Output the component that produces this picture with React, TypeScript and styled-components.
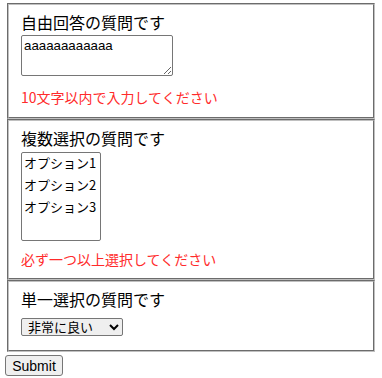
import React from 'react';
import styled, { createGlobalStyle } from 'styled-components';

const GlobalStyle = createGlobalStyle`
    body {
        margin: 3px 5px;
        background: #ffffff;
        font-family: "Liberation Sans", "Noto Sans CJK JP", sans-serif;
        color: #000;
    }
`;

const Form = styled.form`
    display: flex;
    flex-direction: column;
    align-items: flex-start;
`;

const Fieldset = styled.fieldset<{ $bottom: number }>`
    align-self: stretch;
    margin: 0 2px;
    padding: 7px 12px ${(p) => p.$bottom}px 12px;
    border: 2px groove #c0c0c0;
    display: flex;
    flex-direction: column;
    align-items: flex-start;
`;

const Title = styled.div`
    font-family: "Noto Sans CJK JP", sans-serif;
    font-size: 16px;
    line-height: 20px;
`;

const ErrorText = styled.div<{ $gap: number }>`
    margin-top: ${(p) => p.$gap}px;
    font-family: "Noto Sans CJK JP", sans-serif;
    font-size: 14px;
    line-height: 20px;
    color: #ff2b2b;
`;

const TextArea = styled.textarea`
    margin: 3px 0 0 0;
    width: 152px;
    height: 41px;
    box-sizing: border-box;
    padding: 2px 2px;
    font-family: "Liberation Sans", sans-serif;
    font-size: 13.3px;
    border: 1px solid #767676;
    border-radius: 2px;
`;

const MultiSelect = styled.select`
    margin: 4px 0 0 0;
    width: 80px;
    height: 89px;
    box-sizing: border-box;
    padding: 0;
    border: 1px solid #767676;
    border-radius: 2px;
    font-family: "Noto Sans CJK JP", sans-serif;
    font-size: 13px;
    overflow: hidden;
    option {
        height: 22px;
        line-height: 22px;
        padding: 0 2px;
        box-sizing: border-box;
    }
`;

const SingleSelect = styled.select`
    margin: 9px 0 4px 0;
    width: 102px;
    height: 18px;
    box-sizing: border-box;
    font-family: "Liberation Sans", "Noto Sans CJK JP", sans-serif;
    font-size: 13px;
    border: 1px solid #767676;
    border-radius: 2px;
    padding: 0 0 0 2px;
`;

const SubmitButton = styled.button`
    margin-top: 3px;
    height: 21px;
    width: 58px;
    padding: 0;
    font-family: "Liberation Sans", sans-serif;
    font-size: 14px;
    background: #efefef;
    border: 1px solid #767676;
    border-radius: 3px;
`;

const App: React.FC = () => {
    return (
        <>
            <GlobalStyle />
            <Form onSubmit={(e) => e.preventDefault()}>
                <Fieldset $bottom={10}>
                    <Title>自由回答の質問です</Title>
                    <TextArea defaultValue="aaaaaaaaaaaa" />
                    <ErrorText $gap={11}>10文字以内で入力してください</ErrorText>
                </Fieldset>
                <Fieldset $bottom={9}>
                    <Title>複数選択の質問です</Title>
                    <MultiSelect multiple defaultValue={[]}>
                        <option value="1">オプション1</option>
                        <option value="2">オプション2</option>
                        <option value="3">オプション3</option>
                    </MultiSelect>
                    <ErrorText $gap={8}>必ず一つ以上選択してください</ErrorText>
                </Fieldset>
                <Fieldset $bottom={10}>
                    <Title>単一選択の質問です</Title>
                    <SingleSelect defaultValue="5">
                        <option value="5">非常に良い</option>
                        <option value="4">良い</option>
                        <option value="3">普通</option>
                        <option value="2">悪い</option>
                        <option value="1">非常に悪い</option>
                    </SingleSelect>
                </Fieldset>
                <SubmitButton type="submit">Submit</SubmitButton>
            </Form>
        </>
    );
};

export default App;
